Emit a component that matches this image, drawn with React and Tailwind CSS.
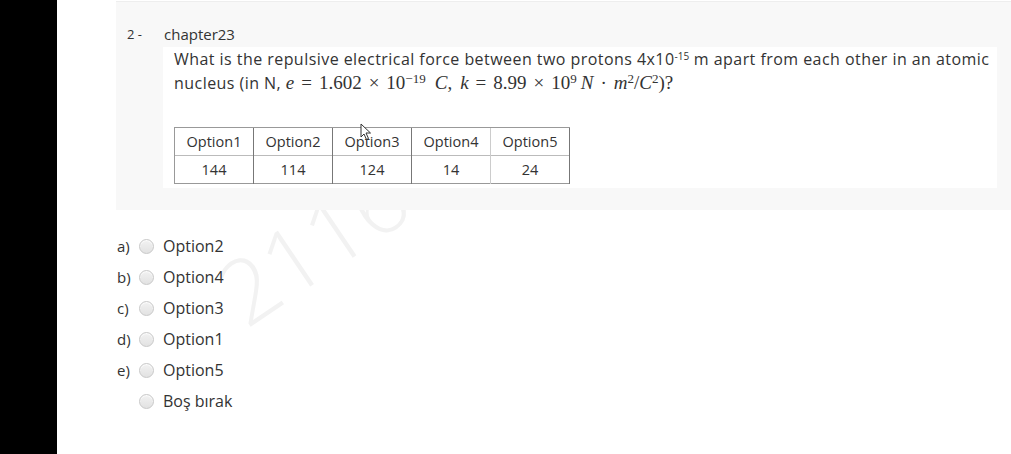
import React from 'react';

const options = [
  { label: 'a)', text: 'Option2' },
  { label: 'b)', text: 'Option4' },
  { label: 'c)', text: 'Option3' },
  { label: 'd)', text: 'Option1' },
  { label: 'e)', text: 'Option5' },
  { label: '', text: 'Boş bırak' },
];

const cols = [
  ['Option1', '144'],
  ['Option2', '114'],
  ['Option3', '124'],
  ['Option4', '14'],
  ['Option5', '24'],
];

const Radio = () => (
  <span className="inline-block w-[15px] h-[15px] rounded-full border border-[#c8c8c8] bg-gradient-to-b from-[#f2f2f2] to-[#e2e2e2] shadow-[inset_0_1px_1px_rgba(255,255,255,0.9)]"></span>
);

const M = ({ children, italic, op }) => (
  <span className={`font-['Liberation_Serif',serif] text-[19px] tracking-normal ${italic ? 'italic' : ''} ${op ? 'mx-[7px]' : ''}`}>{children}</span>
);

const Sup = ({ children }) => (
  <sup className="font-['Liberation_Serif',serif] text-[13px] tracking-normal">{children}</sup>
);

const App = () => {
  return (
    <div className="flex w-[1011px] h-[454px] bg-white overflow-hidden font-['Open_Sans',sans-serif] text-[#333]">
      <div className="w-[57px] h-full bg-black shrink-0"></div>
      <div className="relative flex-1">
        <div className="absolute left-[150px] top-[198px] w-[210px] h-[90px] rotate-[-34deg] text-[90px] font-light leading-[90px] text-center text-[#f2f2f2] font-['Open_Sans',sans-serif] select-none">
          2116
        </div>
        <div className="relative z-10 ml-[59px] mt-[1px] h-[209px] bg-[#f8f8f8] border-t border-[#eeeeee]">
          <div className="flex items-center pt-[20px] h-[45px]">
            <span className="w-[48px] pl-[11px] text-[13px]">2 -</span>
            <span className="text-[15px]">chapter23</span>
          </div>
          <div className="ml-[47px] w-[834px] h-[141px] bg-white pl-[11px]">
            <p className="text-[16px] leading-[24px] text-[#333] tracking-[0.45px] whitespace-nowrap">
              What is the repulsive electrical force between two protons 4x10<sup className="text-[10px] tracking-normal">-15</sup> m apart from each other in an atomic
            </p>
            <p className="text-[16px] leading-[24px] text-[#333] tracking-[0.45px] whitespace-nowrap">
              nucleus (in N, <M italic>e</M><M op>=</M><M>1.602</M><M op>×</M><M>10</M><Sup>−19</Sup><span className="inline-block w-[9px]"></span><M italic>C</M><M>,</M><span className="inline-block w-[8px]"></span><M italic>k</M><M op>=</M><M>8.99</M><M op>×</M><M>10</M><Sup>9</Sup><span className="inline-block w-[4px]"></span><M italic>N</M><M op>·</M><M italic>m</M><Sup>2</Sup><M>/</M><M italic>C</M><Sup>2</Sup><M>)?</M>
            </p>
            <div className="relative mt-[32px] flex w-[396px] border-t border-l border-[#999] text-[14.5px] text-[#333]">
              {cols.map(([h, v], i) => (
                <div key={h} className={`w-[79px] border-r ${i === 3 ? 'border-[#ccc]' : 'border-[#777]'}`}>
                  <div className="h-[28px] flex items-center justify-center border-b border-[#bbb]">{h}</div>
                  <div className="h-[28px] flex items-center justify-center border-b border-[#999]">{v}</div>
                </div>
              ))}
              <svg className="absolute left-[185px] top-[-5px]" width="12" height="18" viewBox="0 0 12 18">
                <path d="M1 1 L1 14 L4 11 L6.5 16.5 L8.5 15.5 L6 10 L10.5 10 Z" fill="white" stroke="#333" strokeWidth="1" />
              </svg>
            </div>
          </div>
        </div>
        <div className="relative z-10 ml-[60px] mt-[26px] flex flex-col gap-[11px]">
          {options.map((o) => (
            <div key={o.text} className="flex items-center h-[20px] text-[16px]">
              <span className="w-[22px] text-[15px] text-[#333]">{o.label}</span>
              <Radio />
              <span className="ml-[9px] text-[#333]">{o.text}</span>
            </div>
          ))}
        </div>
      </div>
    </div>
  );
};

export default App;
